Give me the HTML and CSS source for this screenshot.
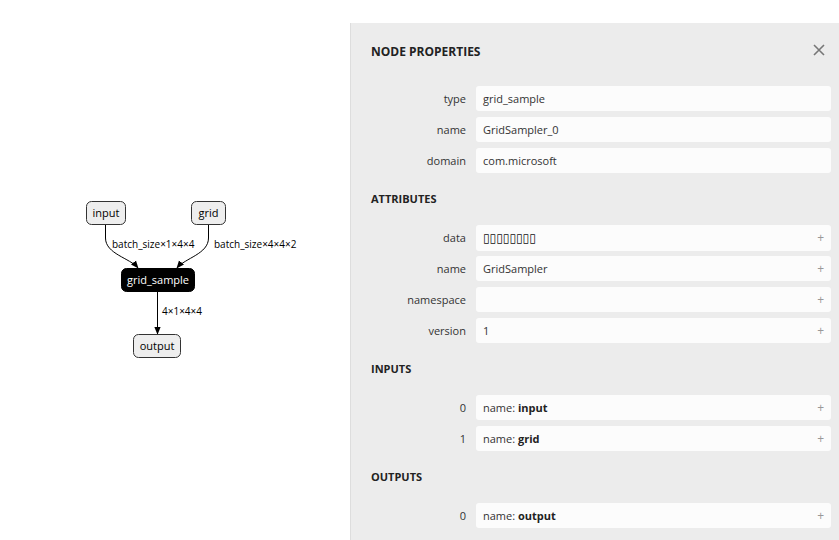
FILE: index.html
```html
<!DOCTYPE html>
<html>
<head>
<meta charset="utf-8">
<link rel="stylesheet" href="styles.css">
</head>
<body>
<div class="app">
  <div class="graph">
    <svg class="graph-svg" width="350" height="540" viewBox="0 0 350 540">
      <defs>
        <marker id="arrow" viewBox="0 0 10 10" refX="9" refY="5" markerWidth="8" markerHeight="8" markerUnits="userSpaceOnUse" orient="auto">
          <path d="M0,1 L10,5 L0,9 Z" fill="#000"/>
        </marker>
      </defs>
      <path class="edge" d="M105.5,224 L105.5,238 C105.5,254 130,258 138,268" marker-end="url(#arrow)"/>
      <path class="edge" d="M208.5,224 L208.5,238 C208.5,254 185,258 177,268" marker-end="url(#arrow)"/>
      <path class="edge" d="M157.5,292 L157.5,334" marker-end="url(#arrow)"/>
      <text class="edge-label" x="112" y="248">batch_size×1×4×4</text>
      <text class="edge-label" x="214" y="248">batch_size×4×4×2</text>
      <text class="edge-label" x="162" y="315">4×1×4×4</text>
      <rect class="node" x="86.5" y="201.5" width="39" height="23" rx="5"/>
      <text class="node-text" x="106" y="217">input</text>
      <rect class="node" x="191.5" y="201.5" width="34" height="23" rx="5"/>
      <text class="node-text" x="208.5" y="217">grid</text>
      <rect class="node op" x="121.5" y="268.5" width="73" height="23" rx="5"/>
      <text class="node-text op-text" x="158" y="284">grid_sample</text>
      <rect class="node" x="133.5" y="334.5" width="47" height="23" rx="5"/>
      <text class="node-text" x="157" y="350">output</text>
    </svg>
  </div>
  <div class="panel">
    <div class="panel-header">
      <div class="panel-title">NODE PROPERTIES</div>
      <div class="close">
        <svg width="12" height="12" viewBox="0 0 12 12"><path d="M1,1 L11,11 M11,1 L1,11" stroke="#777" stroke-width="1.6" fill="none"/></svg>
      </div>
    </div>
    <div class="rows">
      <div class="row"><div class="label">type</div><div class="value">grid_sample</div></div>
      <div class="row"><div class="label">name</div><div class="value">GridSampler_0</div></div>
      <div class="row"><div class="label">domain</div><div class="value">com.microsoft</div></div>
    </div>
    <div class="section">ATTRIBUTES</div>
    <div class="rows">
      <div class="row"><div class="label">data</div><div class="value"><span class="boxes">▯▯▯▯▯▯▯▯</span><span class="plus">+</span></div></div>
      <div class="row"><div class="label">name</div><div class="value">GridSampler<span class="plus">+</span></div></div>
      <div class="row"><div class="label">namespace</div><div class="value"><span class="plus">+</span></div></div>
      <div class="row"><div class="label">version</div><div class="value">1<span class="plus">+</span></div></div>
    </div>
    <div class="section">INPUTS</div>
    <div class="rows">
      <div class="row"><div class="label">0</div><div class="value">name:&nbsp;<b>input</b><span class="plus">+</span></div></div>
      <div class="row"><div class="label">1</div><div class="value">name:&nbsp;<b>grid</b><span class="plus">+</span></div></div>
    </div>
    <div class="section">OUTPUTS</div>
    <div class="rows">
      <div class="row"><div class="label">0</div><div class="value">name:&nbsp;<b>output</b><span class="plus">+</span></div></div>
    </div>
  </div>
</div>
</body>
</html>
```
FILE: styles.css
```css
html, body {
  margin: 0;
  padding: 0;
  background: #fff;
  font-family: "Open Sans", "Noto Sans", sans-serif;
  font-size: 11px;
  color: #333;
}
.app {
  display: flex;
  width: 839px;
  height: 540px;
  overflow: hidden;
}
.graph {
  position: relative;
  width: 350px;
  flex: none;
}
.graph-svg {
  position: absolute;
  left: 0;
  top: 0;
}
.edge {
  fill: none;
  stroke: #000;
  stroke-width: 1;
}
.edge-label {
  font-family: "Open Sans", "Noto Sans", sans-serif;
  font-size: 10px;
  fill: #000;
}
.node {
  fill: #eee;
  stroke: #333;
  stroke-width: 1;
}
.node.op {
  fill: #000;
  stroke: #000;
}
.node-text {
  font-family: "Open Sans", "Noto Sans", sans-serif;
  font-size: 11px;
  fill: #000;
  text-anchor: middle;
}
.op-text {
  fill: #fff;
}
.panel {
  flex: 1;
  margin-top: 23px;
  background: #ececec;
  border-left: 1px solid #ddd;
  padding: 0 8px 0 20px;
}
.panel-header {
  display: flex;
  justify-content: space-between;
  align-items: center;
  height: 56px;
  margin-bottom: 7px;
}
.panel-title {
  font-weight: bold;
  font-size: 12px;
  color: #222;
  padding-top: 1px;
}
.close {
  display: flex;
  width: 12px;
  height: 12px;
  margin-right: 6px;
  margin-top: -2px;
}
.rows {
  display: flex;
  flex-direction: column;
  gap: 6px;
}
.row {
  display: grid;
  grid-template-columns: 95px 1fr;
  column-gap: 10px;
  height: 25px;
}
.label {
  text-align: right;
  line-height: 25px;
  color: #333;
}
.value {
  position: relative;
  background: #fcfcfc;
  border-radius: 3px;
  line-height: 25px;
  padding-left: 7px;
  color: #333;
}
.value b {
  font-weight: bold;
  color: #222;
}
.boxes {
  font-family: "DejaVu Sans", sans-serif;
  font-weight: bold;
  font-size: 12px;
  color: #111;
}
.plus {
  position: absolute;
  right: 7px;
  top: 0;
  color: #999;
  font-size: 12px;
}
.section {
  height: 52px;
  line-height: 52px;
  font-weight: bold;
  color: #222;
}
```
